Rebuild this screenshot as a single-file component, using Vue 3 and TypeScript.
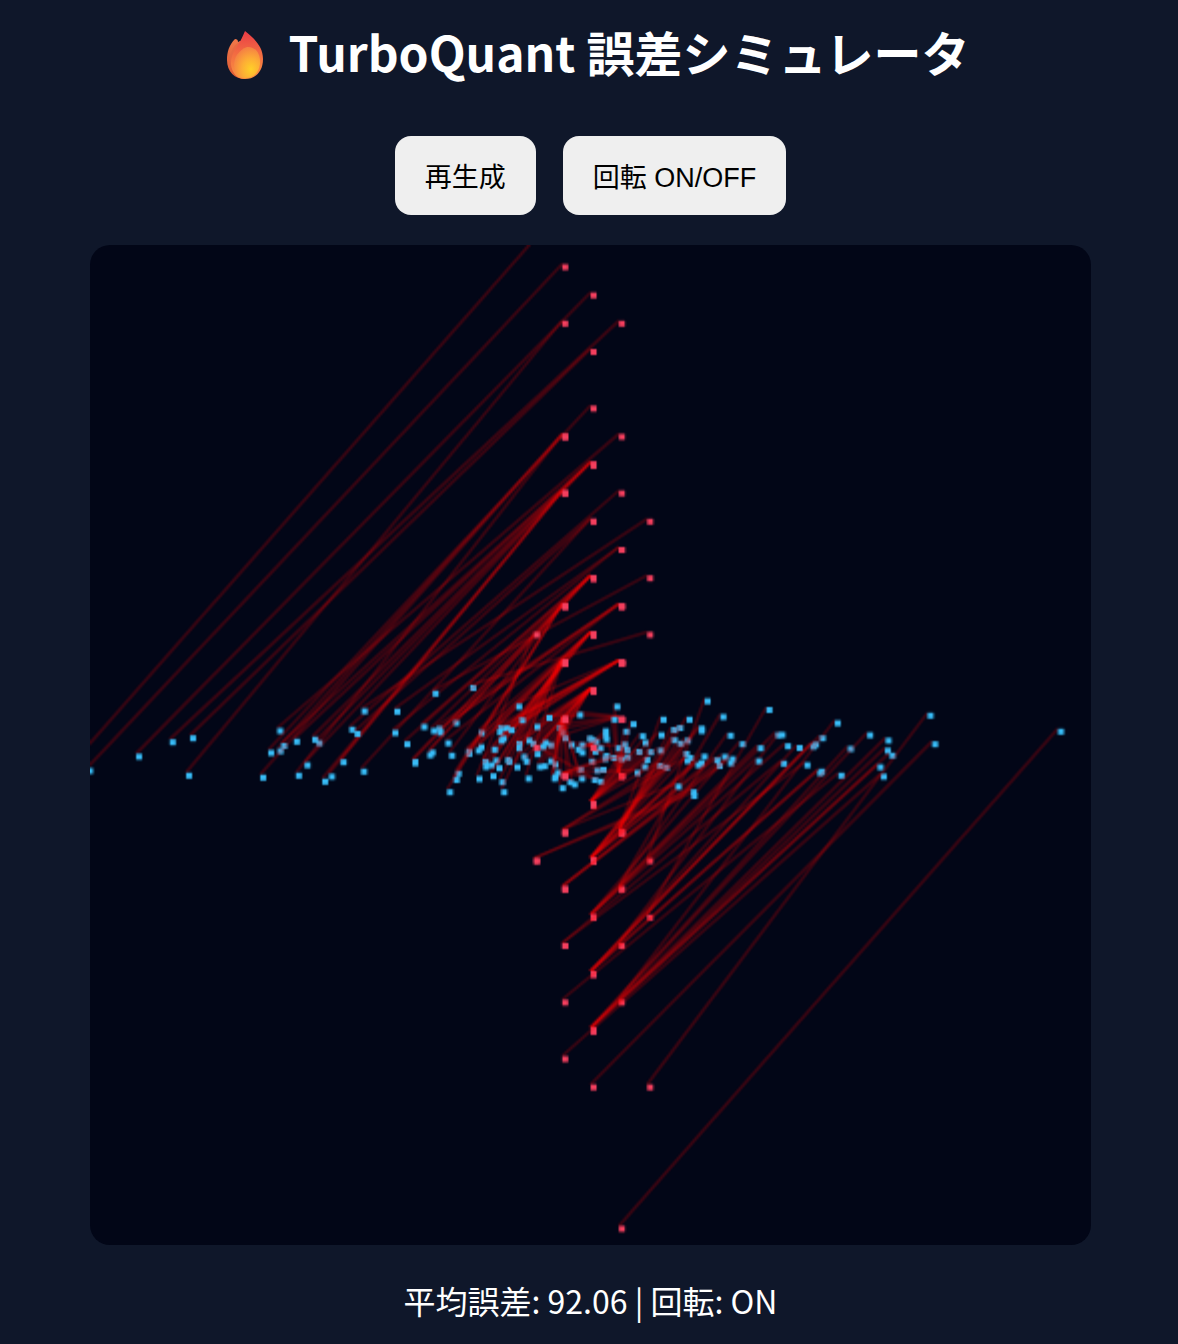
<script setup lang="ts">
import { onMounted, ref } from 'vue'

type Point = [number, number]

const SIZE = 500
const STEP = 20
const ANGLE = Math.PI / 4

// Sample cloud in world units; 2 world units make one canvas pixel.
const WORLD_SCALE = 2
const WORLD_CENTER: Point = [593, 748]
const SAMPLES: Point[] = [
  [65, 778], [90, 771], [139, 756.7], [172.7, 742.3], [193, 738.3], [189, 775.7], [280, 731], [271, 753],
  [280.3, 751.3], [284, 746], [296.7, 741.7], [315, 739.7], [319.3, 743.3], [307.3, 765.3], [298.7, 775.7],
  [263, 777.7], [325, 781.7], [331.7, 776.7], [343.3, 762.3], [352, 729.7], [357.3, 734], [364.3, 711.3],
  [363.7, 771.7], [397, 711.7], [395, 733], [407, 744.3], [415, 762], [415, 763.3], [424, 727], [435.3, 693.7],
  [472.7, 688], [456, 723], [433.7, 731], [439.3, 729], [440.3, 732.7], [448, 743.3], [432.3, 752.7],
  [430, 755.3], [451.7, 755.7], [468.7, 751.7], [468.7, 754], [481.3, 733], [481, 747.3], [478.3, 750.7],
  [458.3, 773.7], [456.3, 780], [449.7, 792.3], [479, 779], [485.3, 762], [485.7, 767], [491.3, 765.3],
  [496, 760.7], [499, 768.3], [493, 776.3], [494.3, 749.7], [506.7, 728.3], [500.7, 728.3], [499.7, 732.3],
  [503.3, 738.7], [501.3, 740.7], [508, 760], [508.7, 762], [502, 782.3], [503.7, 792.3], [518.7, 706.7],
  [522, 720.3], [511.3, 730.3], [519, 744], [519, 748.3], [529, 740.7], [533, 743.7], [537, 727],
  [537.3, 754.3], [545.3, 743], [542.7, 747], [550.7, 745.3], [549, 718], [560, 728], [562, 732.7],
  [565, 738.3], [571.3, 745], [579.7, 715], [616.7, 706.7], [614, 719.7], [524, 757], [526.3, 761.7],
  [517, 767.3], [528.3, 778.7], [539.7, 767], [544.3, 766.3], [550.7, 761.3], [555, 764.7], [557.7, 773],
  [555, 777], [554.3, 778.7], [562.3, 788.3], [570, 782.3], [574.3, 784.7], [581.7, 778.7], [580.3, 769.7],
  [591.7, 761.7], [596.7, 770.7], [603, 770], [594.3, 780], [600.3, 781.7], [582, 745.3], [578.3, 749.7],
  [582, 752.7], [589.7, 738.7], [592.3, 740.3], [595.7, 741.7], [595, 751.7], [600, 748.3], [605.3, 731.3],
  [605.3, 735.3], [606, 739.3], [606, 756], [604.7, 759], [613.7, 758], [621.3, 759.3], [618.3, 748.3],
  [624.3, 744.7], [626, 731.7], [633, 724.3], [626.7, 750], [627.3, 757.3], [637, 773], [638.7, 752],
  [642.3, 736.3], [645, 743], [650.3, 752.3], [646.7, 760], [644.3, 767], [663, 719.7], [661, 735.3],
  [660.3, 750.7], [659.7, 766], [666, 767.7], [673.7, 730], [679.7, 728], [674, 740.3], [680.3, 743.7],
  [687.3, 740.7], [689, 719.7], [701.3, 728.7], [701.3, 731], [686, 754], [690, 758], [687, 761],
  [704, 756.7], [701, 763.3], [698, 765.3], [707, 701.3], [722.7, 717], [730, 735.7], [742, 744.3],
  [716.7, 760.3], [719, 766], [724.3, 757], [732, 759.3], [730.3, 763.3], [678, 786.7], [693.3, 792.3],
  [693.7, 796], [768.7, 710], [777.7, 735.3], [781.7, 735], [760, 748.3], [758.3, 761.3], [787.3, 746.3],
  [783.3, 763.7], [799, 748], [812.7, 746.7], [815.3, 744.7], [822, 738.3], [837, 723.3], [806.7, 765.3],
  [821.3, 771.7], [819.7, 773.3], [840.7, 775.7], [850, 749], [869.3, 735.3], [887.7, 740.7], [887, 750.7],
  [891.7, 755.7], [879.7, 767.3], [883, 776.7], [929.7, 715.7], [934.3, 744.3], [1060, 731.7],
]

const canvas = ref<HTMLCanvasElement | null>(null)
const rotating = ref(true)
const error = ref(92.06)

let points: Point[] = SAMPLES.map(([x, y]) => [
  (x - WORLD_CENTER[0]) / WORLD_SCALE,
  (y - WORLD_CENTER[1]) / WORLD_SCALE,
])

function rotate([x, y]: Point): Point {
  const c = Math.cos(ANGLE)
  const s = Math.sin(ANGLE)
  return [x * c - y * s, x * s + y * c]
}

function snap([x, y]: Point): Point {
  return [Math.round(x / STEP) * STEP, Math.round(y / STEP) * STEP]
}

function quantize(p: Point): Point {
  return rotating.value ? rotate(snap(rotate(p))) : snap(p)
}

function gaussian(): number {
  return Math.sqrt(-2 * Math.log(1 - Math.random())) * Math.cos(2 * Math.PI * Math.random())
}

function draw(): number {
  const ctx = canvas.value?.getContext('2d')
  if (!ctx) return 0
  const half = SIZE / 2
  let total = 0
  ctx.clearRect(0, 0, SIZE, SIZE)
  ctx.lineWidth = 1.5
  for (const p of points) {
    const q = quantize(p)
    total += Math.hypot(p[0] - q[0], p[1] - q[1])
    ctx.strokeStyle = 'rgba(255, 0, 0, 0.24)'
    ctx.beginPath()
    ctx.moveTo(half + p[0], half + p[1])
    ctx.lineTo(half + q[0], half + q[1])
    ctx.stroke()
    ctx.fillStyle = '#38bdf8'
    ctx.fillRect(half + p[0], half + p[1], 3, 3)
    ctx.fillStyle = '#f43f5e'
    ctx.fillRect(half + q[0], half + q[1], 3, 3)
  }
  return total / points.length
}

function regenerate() {
  points = Array.from({ length: 200 }, (): Point => [gaussian() * 80, gaussian() * 10])
  error.value = draw()
}

function toggleRotation() {
  rotating.value = !rotating.value
  error.value = draw()
}

onMounted(draw)
</script>

<template>
  <main class="page">
    <h1 class="title">
      <svg class="flame" viewBox="0 0 66 56" role="img" aria-label="炎">
        <defs>
          <linearGradient id="flame-back" x1="0" y1="0" x2="0" y2="1">
            <stop offset="0" stop-color="#f0784a" />
            <stop offset="1" stop-color="#dd5a33" />
          </linearGradient>
          <linearGradient id="flame-body" x1="0" y1="0" x2="0" y2="1">
            <stop offset="0" stop-color="#ea3b46" />
            <stop offset="0.45" stop-color="#f26a42" />
            <stop offset="1" stop-color="#fb9440" />
          </linearGradient>
          <radialGradient id="flame-core" cx="0.65" cy="0.72" r="0.7">
            <stop offset="0" stop-color="#ffd028" />
            <stop offset="0.5" stop-color="#fdad35" />
            <stop offset="1" stop-color="#f58243" />
          </radialGradient>
        </defs>
        <path d="M23 16C17 22 15 29 15 37c0 12 8 19 18 19l-4-38-3 1c0-2-1-3-3-3z" fill="url(#flame-back)" />
        <path d="M28 18c-7 5-10 12-10 19 0 8 4 14 10 17l5-36c-2 1-4 1-5 0z" fill="#e86a42" />
        <path d="M33 8C31 13 29 17 26 22c-5 7-7 12-7 19 1 9 6 15 14 15 10 0 18-7 18-20C51 24 43 16 33 8z" fill="url(#flame-body)" />
        <path d="M35 24c-8 3-13 10-13 18 0 8 4 13 11 13 9 0 14-6 15-14 1-9-4-18-13-17z" fill="url(#flame-core)" />
      </svg>
      TurboQuant 誤差シミュレータ
    </h1>
    <div class="controls">
      <button type="button" @click="regenerate">再生成</button>
      <button type="button" @click="toggleRotation">回転 ON/OFF</button>
    </div>
    <canvas ref="canvas" class="plot" :width="SIZE" :height="SIZE"></canvas>
    <p class="status">平均誤差: {{ error.toFixed(2) }} | 回転: {{ rotating ? 'ON' : 'OFF' }}</p>
  </main>
</template>

<style>
body {
  margin: 0;
  background: #0f172a;
}
</style>

<style scoped>
.page {
  box-sizing: border-box;
  min-height: 100vh;
  padding: 15px 0 15px 3px;
  display: flex;
  flex-direction: column;
  align-items: center;
  background: #0f172a;
  color: #fff;
  font-family: "Noto Sans CJK JP", "Noto Sans", sans-serif;
}

.title {
  margin: 0;
  display: flex;
  align-items: center;
  gap: 11px;
  font-size: 48px;
  line-height: 72px;
  font-weight: 700;
}

.flame {
  width: 66px;
  height: 56px;
}

.controls {
  margin: 49px 0 30px;
  display: flex;
  gap: 27px;
}

button {
  padding: 23px 30px 17px;
  border: 0;
  border-radius: 16px;
  background: #efefef;
  color: #000;
  font-family: "Liberation Sans", "Noto Sans CJK JP", sans-serif;
  font-size: 27px;
  line-height: 39px;
}

.plot {
  width: 86%;
  max-width: 1001px;
  aspect-ratio: 1001 / 1000;
  border-radius: 20px;
  background: #020617;
}

.status {
  margin: 31px 0 0;
  font-size: 32px;
  line-height: 48px;
}
</style>
